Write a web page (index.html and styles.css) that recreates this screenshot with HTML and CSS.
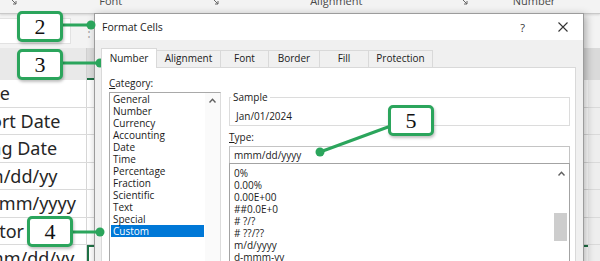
FILE: index.html
```html
<!DOCTYPE html>
<html lang="en">

<head>
    <meta charset="UTF-8">
    <meta name="viewport" content="width=device-width, initial-scale=1.0">
    <title>Format Cells</title>
    <link rel="stylesheet" href="styles.css">
</head>

<body>
    <!-- excel behind the dialog -->
    <div class="sheet">
        <div class="ribbon">
            <svg class="launch first" width="8" height="8" viewBox="0 0 8 8"><path d="M0.5 3V0.5H3M2 2l5 5M7 4v3H4" /></svg>
            <span class="grp g1">Font</span>
            <svg class="launch" width="8" height="8" viewBox="0 0 8 8"><path d="M0.5 3V0.5H3M2 2l5 5M7 4v3H4" /></svg>
            <span class="grp g2">Alignment</span>
            <svg class="launch" width="8" height="8" viewBox="0 0 8 8"><path d="M0.5 3V0.5H3M2 2l5 5M7 4v3H4" /></svg>
            <span class="grp g3">Number</span>
        </div>
        <div class="fbar">
            <div class="namebox"></div>
            <span class="grip">⋮</span>
        </div>
        <div class="colhead">
            <div class="ch-a"></div>
            <div class="ch-b"></div>
            <div class="ch-rest"></div>
        </div>
        <div class="row"><div class="ca"><span>Date</span></div><div class="cb"></div><div class="cc"></div></div>
        <div class="row"><div class="ca"><span>Short Date</span></div><div class="cb"></div><div class="cc"></div></div>
        <div class="row"><div class="ca"><span>Long Date</span></div><div class="cb"></div><div class="cc"></div></div>
        <div class="row"><div class="ca"><span>mm/dd/yy</span></div><div class="cb"></div><div class="cc"></div></div>
        <div class="row"><div class="ca"><span>dd/mm/yyyy</span></div><div class="cb"></div><div class="cc"></div></div>
        <div class="row"><div class="ca"><span>Vector</span></div><div class="cb"></div><div class="cc"></div></div>
        <div class="row"><div class="ca"><span>mmm/dd/yy</span></div><div class="cb sel"></div><div class="cc"></div></div>
    </div>

    <!-- the dialog -->
    <div class="dialog">
        <div class="titlebar">
            <span class="title">Format Cells</span>
            <span class="help">?</span>
            <svg class="close" width="10" height="10" viewBox="0 0 10 10"><path d="M0.5 0.5L9.5 9.5M9.5 0.5L0.5 9.5" /></svg>
        </div>
        <div class="dbody">
            <div class="tabs">
                <span class="tab active t-num">Number</span>
                <span class="tab t-align">Alignment</span>
                <span class="tab t-font">Font</span>
                <span class="tab t-border">Border</span>
                <span class="tab t-fill">Fill</span>
                <span class="tab t-prot">Protection</span>
            </div>
            <div class="panel">
                <div class="leftcol">
                    <p class="lbl"><u>C</u>ategory:</p>
                    <div class="listbox">
                        <ul class="items">
                            <li>General</li>
                            <li>Number</li>
                            <li>Currency</li>
                            <li>Accounting</li>
                            <li>Date</li>
                            <li>Time</li>
                            <li>Percentage</li>
                            <li>Fraction</li>
                            <li>Scientific</li>
                            <li>Text</li>
                            <li>Special</li>
                            <li class="picked">Custom</li>
                        </ul>
                        <div class="vscroll">
                            <svg class="up" width="7" height="5" viewBox="0 0 7 5"><path d="M0.5 4.5L3.5 1.2L6.5 4.5" /></svg>
                        </div>
                    </div>
                </div>
                <div class="rightcol">
                    <fieldset class="sample">
                        <legend>Sample</legend>
                        <p>Jan/01/2024</p>
                    </fieldset>
                    <p class="lbl type-lbl"><u>T</u>ype:</p>
                    <div class="typebox">mmm/dd/yyyy</div>
                    <div class="listbox typelist">
                        <ul class="items">
                            <li>0%</li>
                            <li>0.00%</li>
                            <li>0.00E+00</li>
                            <li>##0.0E+0</li>
                            <li># ?/?</li>
                            <li># ??/??</li>
                            <li>m/d/yyyy</li>
                            <li>d-mmm-yy</li>
                            <li>d-mmm</li>
                        </ul>
                        <div class="vscroll">
                            <svg class="up" width="7" height="5" viewBox="0 0 7 5"><path d="M0.5 4.5L3.5 1.2L6.5 4.5" /></svg>
                            <div class="thumb"></div>
                        </div>
                    </div>
                </div>
            </div>
        </div>
    </div>

    <!-- callouts -->
    <svg class="leaders" width="600" height="261" viewBox="0 0 600 261">
        <g stroke="#2ba55c" stroke-width="3" stroke-linecap="round">
            <line x1="62" y1="25" x2="91" y2="25" />
            <line x1="62" y1="63" x2="100" y2="63" />
            <line x1="72" y1="232" x2="100" y2="232" />
            <line x1="388" y1="127" x2="320" y2="152" />
        </g>
        <g fill="#2ba55c">
            <circle cx="91" cy="25" r="4.5" />
            <circle cx="100" cy="63" r="4.5" />
            <circle cx="100" cy="232" r="4.5" />
            <circle cx="320" cy="152" r="4.5" />
        </g>
    </svg>
    <div class="tag t2">2</div>
    <div class="tag t3">3</div>
    <div class="tag t4">4</div>
    <div class="tag t5">5</div>
</body>

</html>
```

FILE: styles.css
```css
/*
    base
*/
html,
body {
    margin: 0;
    padding: 0;
}

body {
    position: relative;
    width: 600px;
    height: 261px;
    overflow: hidden;
    background: #fff;
    font-family: "Open Sans", "Liberation Sans", sans-serif;
}

p,
ul,
li {
    margin: 0;
    padding: 0;
    list-style: none;
}

/*
    excel sheet
*/
.ribbon {
    display: flex;
    height: 13px;
    overflow: hidden;
    background: #f3f3f3;
    border-bottom: 1px solid #c9c9c9;
    box-shadow: 0 1px 2px rgba(0, 0, 0, .12);
    position: relative;
}

.ribbon .grp {
    font-size: 11px;
    line-height: 13px;
    margin-top: -6px;
    color: #4a4a4a;
    text-align: center;
}

.ribbon .g1 {
    width: 196px;
}

.ribbon .g2 {
    width: 246px;
}

.ribbon .g3 {
    width: 132px;
    flex: none;
}

.launch {
    flex: none;
    margin-top: -3px;
    margin-left: 6px;
}

.launch.first {
    margin-left: 9px;
}

.launch path {
    fill: none;
    stroke: #666;
    stroke-width: 1;
}

.fbar {
    display: flex;
    align-items: center;
    height: 34px;
    background: #f3f3f3;
}

.namebox {
    width: 70px;
    height: 24px;
    background: #fff;
    border: 1px solid #e2e2e2;
    border-left: none;
}

.grip {
    margin-left: 12px;
    color: #a8a8a8;
    font-size: 12px;
}

.colhead {
    display: flex;
    height: 32px;
    background: #e9e9e9;
}

.ch-a {
    width: 86px;
    border-right: 1px solid #d0d0d0;
}

.ch-b {
    width: 7px;
    background: #dcdcdc;
    border-bottom: 2px solid #1e7145;
    box-sizing: border-box;
}

.ch-rest {
    flex: 1;
    background: #dadada;
}

.row {
    display: flex;
    height: 27.5px;
    border-bottom: 1px solid #dadada;
    box-sizing: border-box;
}

.ca {
    width: 86px;
    overflow: hidden;
    white-space: nowrap;
    border-right: 1px solid #d6d6d6;
    font-family: "Noto Sans", sans-serif;
    font-size: 18px;
    line-height: 26px;
    color: #262626;
}

.ca span {
    display: inline-block;
    margin-left: -30px;
}

.cb {
    flex: 1;
}

.cb.sel {
    border-left: 2px solid #1e7145;
    border-top: 2px solid #1e7145;
}

.cc {
    width: 12px;
    background: #eeeeee;
}

/*
    dialog
*/
.dialog {
    position: absolute;
    top: 13px;
    left: 94px;
    width: 488px;
    height: 280px;
    background: #f0f0f0;
    border: 1px solid #9c9c9c;
    box-shadow: 2px 2px 8px rgba(0, 0, 0, .3);
    color: #1a1a1a;
}

.titlebar {
    display: flex;
    align-items: center;
    height: 26px;
    padding: 0 15px 0 7px;
    background: #fff;
}

.title {
    font-size: 10.5px;
    color: #1b1b1b;
}

.help {
    margin-left: auto;
    margin-right: 33px;
    font-size: 11px;
    color: #333;
}

.close path {
    stroke: #333;
    stroke-width: 1.1;
}

.dbody {
    padding: 8px 7px 0 6px;
}

.tabs {
    display: flex;
    align-items: flex-end;
    height: 19px;
}

.tab {
    box-sizing: border-box;
    height: 17px;
    margin-left: -1px;
    border: 1px solid #d9d9d9;
    border-bottom: none;
    font-size: 10px;
    line-height: 15px;
    text-align: center;
    background: #f0f0f0;
}

.tab.active {
    position: relative;
    z-index: 1;
    height: 20px;
    margin-left: 0;
    margin-bottom: -1px;
    line-height: 18px;
    background: #fff;
}

.t-num {
    width: 56px;
}

.t-align {
    width: 65px;
}

.t-font {
    width: 49px;
}

.t-border {
    width: 52px;
}

.t-fill {
    width: 50px;
}

.t-prot {
    width: 65px;
}

.panel {
    display: flex;
    gap: 8px;
    height: 230px;
    padding: 9px 5px 0 7px;
    background: #fff;
    border: 1px solid #d9d9d9;
}

.lbl {
    font-size: 10px;
    line-height: 12px;
    margin-bottom: 3px;
}

.leftcol {
    width: 112px;
    flex: none;
}

.listbox {
    display: flex;
    height: 175px;
    border: 1px solid #a9a9a9;
    border-right-color: #dcdcdc;
    box-sizing: border-box;
}

.listbox .items {
    flex: 1;
    padding: 0 1px;
    font-size: 10px;
    line-height: 12px;
}

.listbox .items li {
    padding-left: 2px;
    white-space: nowrap;
}

.listbox .items li.picked {
    background: #0078d7;
    color: #fff;
}

.vscroll {
    width: 15px;
    flex: none;
    display: flex;
    flex-direction: column;
    align-items: center;
    background: #fafafa;
}

.vscroll .up {
    margin-top: 5px;
}

.vscroll .up path {
    fill: none;
    stroke: #5f5f5f;
    stroke-width: 1.4;
}

.rightcol {
    flex: 1;
    margin-top: 14px;
}

.sample {
    margin: 0;
    padding: 7px 6px 3px;
    border: 1px solid #dcdcdc;
    min-width: 0;
}

.sample legend {
    padding: 0 2px;
    margin-left: -5px;
    font-size: 10px;
    line-height: 12px;
}

.sample p {
    font-size: 10px;
    line-height: 12px;
}

.type-lbl {
    margin-top: 5px;
}

.typebox {
    box-sizing: border-box;
    height: 17px;
    padding-left: 4px;
    border: 1px solid #c4c4c4;
    border-bottom: none;
    font-size: 10px;
    line-height: 16px;
}

.typelist {
    height: 110px;
    border-color: #a3a3a3;
    border-right-color: #a3a3a3;
}

.typelist .items {
    padding: 3px 0 0 4px;
}

.typelist .items li {
    padding-left: 0;
}

.typelist .vscroll {
    align-items: flex-start;
    background: #fff;
}

.typelist .up {
    margin-left: 4px;
    margin-top: 7px;
}

.thumb {
    width: 13px;
    height: 28px;
    margin-top: 37px;
    background: #cdcdcd;
}

/*
    callouts
*/
.leaders {
    position: absolute;
    top: 0;
    left: 0;
    pointer-events: none;
}

.tag {
    position: absolute;
    box-sizing: border-box;
    width: 46px;
    height: 31px;
    border: 3px solid #2ba55c;
    border-radius: 5px;
    background: #fff;
    box-shadow: 1px 2px 3px rgba(0, 0, 0, .25);
    font-family: "Liberation Serif", serif;
    font-size: 22px;
    line-height: 25px;
    text-align: center;
    color: #111;
}

.t2 {
    top: 11px;
    left: 17px;
}

.t3 {
    top: 49px;
    left: 17px;
}

.t4 {
    top: 216px;
    left: 27px;
}

.t5 {
    top: 105px;
    left: 388px;
}
```
